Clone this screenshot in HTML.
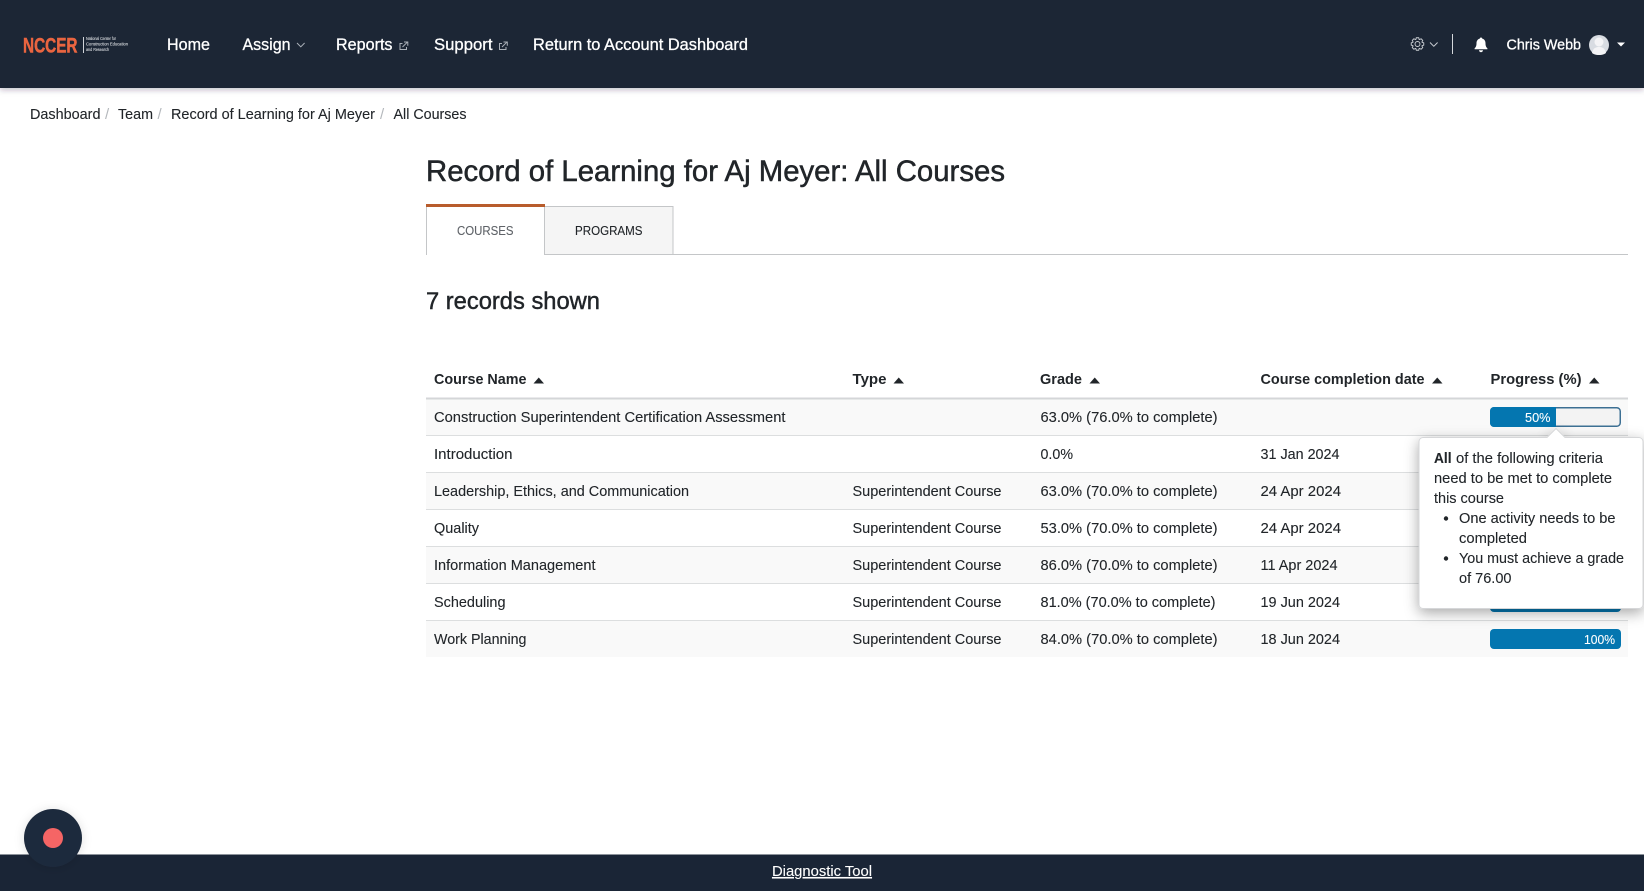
<!DOCTYPE html>
<html lang="en">
<head>
<meta charset="utf-8">
<title>Record of Learning for Aj Meyer: All Courses</title>
<style>
html,body{margin:0;padding:0;background:#fff;width:1644px;height:891px;overflow:hidden}
svg{display:block;position:absolute;left:0;top:0}
text{font-family:"Liberation Sans",sans-serif;fill:#212529;font-size:15px;stroke:#212529;stroke-width:.1px}
.nav{fill:#fff;font-size:17px;stroke:#fff;stroke-width:.3px}
.th{font-weight:700;font-size:15px;stroke-width:0}
.tab{font-size:13px}
.lg{fill:#d5d8dc;font-size:4.8px;stroke:#d5d8dc;stroke-width:.1px}
</style>
</head>
<body>
<svg width="1644" height="891" viewBox="0 0 1644 891" xmlns="http://www.w3.org/2000/svg">
<defs>
<filter id="ns" x="-2%" y="-20%" width="104%" height="150%"><feDropShadow dx="0" dy="2" stdDeviation="3" flood-color="#2a2440" flood-opacity=".28"/></filter>
<filter id="ps" x="-20%" y="-20%" width="140%" height="140%"><feDropShadow dx="0" dy="4" stdDeviation="7" flood-color="#000" flood-opacity=".34"/></filter>
<filter id="bs" x="-30%" y="-30%" width="160%" height="160%"><feDropShadow dx="0" dy="1" stdDeviation="5" flood-color="#000" flood-opacity=".12"/></filter>
</defs>

<!-- Top nav -->
<rect x="0" y="0" width="1644" height="88" fill="#1a2536" filter="url(#ns)"/>
<text x="23" y="52.500" textLength="54.500" lengthAdjust="spacingAndGlyphs" style="font-weight:700;font-size:21px;fill:#ea6540;stroke:#ea6540;stroke-width:.5px">NCCER</text>
<rect x="83" y="37" width="1" height="16" fill="#cfd3d8"/>
<text class="lg" x="86" y="40" textLength="30" lengthAdjust="spacingAndGlyphs">National Center for</text>
<text class="lg" x="86" y="45.500" textLength="42" lengthAdjust="spacingAndGlyphs">Construction Education</text>
<text class="lg" x="86" y="51" textLength="23" lengthAdjust="spacingAndGlyphs">and Research</text>

<text class="nav" x="167" y="50" textLength="43" lengthAdjust="spacingAndGlyphs">Home</text>
<text class="nav" x="242.500" y="50" textLength="48" lengthAdjust="spacingAndGlyphs">Assign</text>
<path d="M297 43l3.800 3.800 3.800-3.800" fill="none" stroke="#aab0b8" stroke-width="1"/>
<text class="nav" x="336" y="50" textLength="56.500" lengthAdjust="spacingAndGlyphs">Reports</text>
<g fill="none" stroke="#aab0b8" stroke-width="1">
<path d="M402.500 43.500h-2.500v6h6.500v-2.500M402.500 47l4.800-4.800M404 42h3.800v3.800"/>
<path d="M502 43.500h-2.500v6h6.500v-2.500M502 47l4.800-4.800M503.500 42h3.800v3.800"/>
</g>
<text class="nav" x="434" y="50" textLength="58.500" lengthAdjust="spacingAndGlyphs">Support</text>
<text class="nav" x="533" y="50" textLength="215" lengthAdjust="spacingAndGlyphs">Return to Account Dashboard</text>

<!-- right nav icons -->
<g fill="none" stroke="#c9cdd2" stroke-width="1" stroke-linejoin="round">
<g transform="translate(1417.500 44) scale(.95)">
<circle cx="0" cy="0" r="2.600"/>
<path d="M4.790-1.740L6.580-1.280 6.580 1.280 4.790 1.740 4.620 2.160 5.550 3.750 3.750 5.550 2.160 4.620 1.740 4.790 1.280 6.580-1.280 6.580-1.740 4.790-2.160 4.620-3.750 5.550-5.550 3.750-4.620 2.160-4.790 1.740-6.580 1.280-6.580-1.280-4.790-1.740-4.620-2.160-5.550-3.750-3.750-5.550-2.160-4.620-1.740-4.790-1.280-6.580 1.280-6.580 1.740-4.790 2.160-4.620 3.750-5.550 5.550-3.750 4.620-2.160Z"/>
</g>
<path d="M1430 42.500l3.800 3.800 3.800-3.800"/>
</g>
<rect x="1452" y="34" width="1" height="20" fill="#d5d8dc"/>
<path d="M1481 37.500c.8 0 1.200.5 1.200 1.100 2.300.6 3.300 2.400 3.300 4.600 0 2.600.6 3.800 1.900 5.100v.9h-12.800v-.9c1.300-1.300 1.900-2.500 1.900-5.100 0-2.200 1-4 3.300-4.600 0-.6.400-1.100 1.200-1.100zM1479 50.300h4c0 1.200-.9 1.900-2 1.900s-2-.7-2-1.900z" fill="#fff"/>
<text class="nav" x="1506.500" y="49.500" textLength="74.500" lengthAdjust="spacingAndGlyphs" style="font-size:15px">Chris Webb</text>
<circle cx="1599" cy="45" r="10" fill="#d8dce2"/>
<circle cx="1599" cy="42" r="4.500" fill="#f4f4f6"/>
<path d="M1592 53c1-5 4-6 7-6s6 1 7 6c-2 1.500-4.500 2-7 2s-5-.5-7-2z" fill="#f4f4f6"/>
<path d="M1617 42.500h8l-4 4z" fill="#fff"/>

<!-- Breadcrumb -->
<text x="30" y="119" textLength="70.500" lengthAdjust="spacingAndGlyphs">Dashboard</text>
<text x="105" y="119" style="fill:#b4b8bc;stroke:none">/</text>
<text x="118" y="119" textLength="35" lengthAdjust="spacingAndGlyphs">Team</text>
<text x="157.500" y="119" style="fill:#b4b8bc;stroke:none">/</text>
<text x="171" y="119" textLength="204" lengthAdjust="spacingAndGlyphs">Record of Learning for Aj Meyer</text>
<text x="380" y="119" style="fill:#b4b8bc;stroke:none">/</text>
<text x="393.500" y="119" textLength="73" lengthAdjust="spacingAndGlyphs">All Courses</text>

<!-- Title -->
<text x="426" y="181" textLength="579" lengthAdjust="spacingAndGlyphs" style="font-size:30px;stroke:#212529;stroke-width:.5px">Record of Learning for Aj Meyer: All Courses</text>

<!-- Tabs -->
<rect x="426" y="254" width="1202" height="1" fill="#c4c6c8"/>
<rect x="544" y="206.500" width="129" height="48" fill="#f5f5f5" stroke="#c4c6c8"/>
<rect x="426.500" y="206" width="118" height="49" fill="#fff"/>
<path d="M426.500 206v49M544.500 206v49" stroke="#c4c6c8" fill="none"/>
<rect x="426" y="204" width="119" height="3" fill="#b85c2c"/>
<text class="tab" x="457" y="235" textLength="56.500" lengthAdjust="spacingAndGlyphs" style="fill:#5f6368;stroke:#5f6368">COURSES</text>
<text class="tab" x="575" y="235" textLength="67.500" lengthAdjust="spacingAndGlyphs">PROGRAMS</text>

<!-- Records -->
<text x="426" y="309" textLength="174" lengthAdjust="spacingAndGlyphs" style="font-size:24px;stroke:#212529;stroke-width:.45px">7 records shown</text>

<!-- Table head -->
<text class="th" x="434" y="384" textLength="92.500" lengthAdjust="spacingAndGlyphs">Course Name</text>
<path d="M533.500 383.500h10.500l-5.250-6z" fill="#212529"/>
<text class="th" x="852.500" y="384" textLength="34" lengthAdjust="spacingAndGlyphs">Type</text>
<path d="M893.500 383.500h10.500l-5.250-6z" fill="#212529"/>
<text class="th" x="1040" y="384" textLength="42" lengthAdjust="spacingAndGlyphs">Grade</text>
<path d="M1089.500 383.500h10.500l-5.250-6z" fill="#212529"/>
<text class="th" x="1260.500" y="384" textLength="164" lengthAdjust="spacingAndGlyphs">Course completion date</text>
<path d="M1432 383.500h10.500l-5.250-6z" fill="#212529"/>
<text class="th" x="1490.500" y="384" textLength="91" lengthAdjust="spacingAndGlyphs">Progress (%)</text>
<path d="M1589 383.500h10.500l-5.250-6z" fill="#212529"/>

<!-- Table rows -->
<rect x="426" y="398" width="1202" height="37" fill="#f9f9f9"/>
<rect x="426" y="472" width="1202" height="37" fill="#f9f9f9"/>
<rect x="426" y="546" width="1202" height="37" fill="#f9f9f9"/>
<rect x="426" y="620" width="1202" height="37" fill="#f9f9f9"/>
<g fill="#dcdedf">
<rect x="426" y="397.500" width="1202" height="2" fill="#d4d6d8"/>
<rect x="426" y="435" width="1202" height="1"/>
<rect x="426" y="472" width="1202" height="1"/>
<rect x="426" y="509" width="1202" height="1"/>
<rect x="426" y="546" width="1202" height="1"/>
<rect x="426" y="583" width="1202" height="1"/>
<rect x="426" y="620" width="1202" height="1"/>
</g>

<text x="434" y="422" textLength="351.500" lengthAdjust="spacingAndGlyphs">Construction Superintendent Certification Assessment</text>
<text x="1040.500" y="422" textLength="177" lengthAdjust="spacingAndGlyphs">63.0% (76.0% to complete)</text>

<text x="434" y="459" textLength="78.500" lengthAdjust="spacingAndGlyphs">Introduction</text>
<text x="1040.500" y="459" textLength="32.500" lengthAdjust="spacingAndGlyphs">0.0%</text>
<text x="1260.500" y="459" textLength="79" lengthAdjust="spacingAndGlyphs">31 Jan 2024</text>

<text x="434" y="496" textLength="255" lengthAdjust="spacingAndGlyphs">Leadership, Ethics, and Communication</text>
<text x="852.500" y="496" textLength="149" lengthAdjust="spacingAndGlyphs">Superintendent Course</text>
<text x="1040.500" y="496" textLength="177" lengthAdjust="spacingAndGlyphs">63.0% (70.0% to complete)</text>
<text x="1260.500" y="496" textLength="80.500" lengthAdjust="spacingAndGlyphs">24 Apr 2024</text>

<text x="434" y="533" textLength="45" lengthAdjust="spacingAndGlyphs">Quality</text>
<text x="852.500" y="533" textLength="149" lengthAdjust="spacingAndGlyphs">Superintendent Course</text>
<text x="1040.500" y="533" textLength="177" lengthAdjust="spacingAndGlyphs">53.0% (70.0% to complete)</text>
<text x="1260.500" y="533" textLength="80.500" lengthAdjust="spacingAndGlyphs">24 Apr 2024</text>

<text x="434" y="570" textLength="161.500" lengthAdjust="spacingAndGlyphs">Information Management</text>
<text x="852.500" y="570" textLength="149" lengthAdjust="spacingAndGlyphs">Superintendent Course</text>
<text x="1040.500" y="570" textLength="177" lengthAdjust="spacingAndGlyphs">86.0% (70.0% to complete)</text>
<text x="1260.500" y="570" textLength="77" lengthAdjust="spacingAndGlyphs">11 Apr 2024</text>

<text x="434" y="607" textLength="71.500" lengthAdjust="spacingAndGlyphs">Scheduling</text>
<text x="852.500" y="607" textLength="149" lengthAdjust="spacingAndGlyphs">Superintendent Course</text>
<text x="1040.500" y="607" textLength="175" lengthAdjust="spacingAndGlyphs">81.0% (70.0% to complete)</text>
<text x="1260.500" y="607" textLength="79.500" lengthAdjust="spacingAndGlyphs">19 Jun 2024</text>

<text x="434" y="644" textLength="92.500" lengthAdjust="spacingAndGlyphs">Work Planning</text>
<text x="852.500" y="644" textLength="149" lengthAdjust="spacingAndGlyphs">Superintendent Course</text>
<text x="1040.500" y="644" textLength="177" lengthAdjust="spacingAndGlyphs">84.0% (70.0% to complete)</text>
<text x="1260.500" y="644" textLength="79.500" lengthAdjust="spacingAndGlyphs">18 Jun 2024</text>

<!-- Progress bars -->
<rect x="1490.750" y="407.750" width="129.500" height="18.500" rx="3.500" fill="#f3f3f3" stroke="#3d7094" stroke-width="1.500"/>
<path d="M1494 407h62v20h-62a4 4 0 0 1-4-4v-12a4 4 0 0 1 4-4z" fill="#0476b0"/>
<text x="1525" y="422" textLength="25.500" lengthAdjust="spacingAndGlyphs" style="fill:#fff;stroke:#fff;font-size:13px">50%</text>
<rect x="1490" y="592" width="131" height="20" rx="4" fill="#0476b0"/>
<rect x="1490" y="629" width="131" height="20" rx="4" fill="#0476b0"/>
<text x="1584" y="644" textLength="31" lengthAdjust="spacingAndGlyphs" style="fill:#fff;stroke:#fff;font-size:13px">100%</text>

<!-- Popover -->
<path d="M1423 437.500h124l9-9 9 9h74a4 4 0 0 1 4 4v163a4 4 0 0 1-4 4h-216a4 4 0 0 1-4-4v-163a4 4 0 0 1 4-4z" fill="#fff" stroke="#d6d7d9" filter="url(#ps)"/>
<text x="1434" y="463" textLength="17.500" lengthAdjust="spacingAndGlyphs" style="font-weight:700">All</text>
<text x="1456" y="463" textLength="147" lengthAdjust="spacingAndGlyphs">of the following criteria</text>
<text x="1434" y="483" textLength="178" lengthAdjust="spacingAndGlyphs">need to be met to complete</text>
<text x="1434" y="503" textLength="70" lengthAdjust="spacingAndGlyphs">this course</text>
<circle cx="1446" cy="518.500" r="2.200" fill="#212529"/>
<text x="1459" y="523" textLength="156.500" lengthAdjust="spacingAndGlyphs">One activity needs to be</text>
<text x="1459" y="543" textLength="68" lengthAdjust="spacingAndGlyphs">completed</text>
<circle cx="1446" cy="558.500" r="2.200" fill="#212529"/>
<text x="1459" y="563" textLength="165" lengthAdjust="spacingAndGlyphs">You must achieve a grade</text>
<text x="1459" y="583" textLength="52.500" lengthAdjust="spacingAndGlyphs">of 76.00</text>

<!-- Footer -->
<rect x="0" y="854.500" width="1644" height="36.500" fill="#1a2536"/>
<text x="772" y="876" textLength="100" lengthAdjust="spacingAndGlyphs" style="fill:#fff;stroke:#fff;font-size:15px;text-decoration:underline">Diagnostic Tool</text>

<!-- Record button -->
<circle cx="53" cy="838" r="29" fill="#1f2a3c" filter="url(#bs)"/>
<circle cx="53" cy="838" r="10" fill="#f56565"/>
</svg>
</body>
</html>
